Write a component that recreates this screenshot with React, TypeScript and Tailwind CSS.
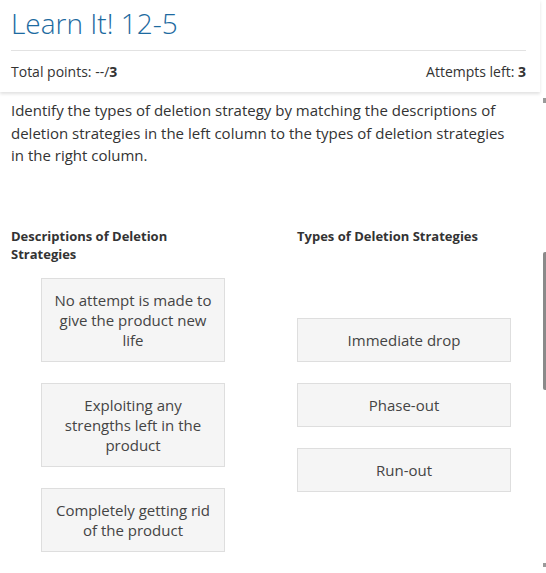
import React from "react";

const descriptions = [
  "No attempt is made to give the product new life",
  "Exploiting any strengths left in the product",
  "Completely getting rid of the product",
];

const types = ["Immediate drop", "Phase-out", "Run-out"];

function Card({ text, width }: { text: string; width: string }) {
  return (
    <div
      className={`${width} border border-[#dedede] bg-[#f5f5f5] px-3 py-[11px] text-center text-[15px] leading-[20px] text-[#444]`}
    >
      {text}
    </div>
  );
}

export default function App() {
  return (
    <div className="flex h-[573px] w-[546px] flex-col overflow-hidden bg-white font-['Open_Sans',sans-serif] text-[#333]">
      {/* header */}
      <div className="relative z-10 w-[540px] bg-white px-[11px] pt-[6px] shadow-[0_2px_3px_rgba(0,0,0,0.12)]">
        <h1 className="text-[28px] font-light leading-[34px] text-[#1d6aa0]">Learn It! 12-5</h1>
        <div className="mt-[10px] h-px w-[515px] bg-[#e2e2e2]" />
        <div className="flex w-[515px] items-center justify-between pt-[11px] pb-[10px] text-[14px] leading-[20px] text-[#333]">
          <span>
            Total points: --/<b className="font-bold">3</b>
          </span>
          <span>
            Attempts left: <b className="font-bold">3</b>
          </span>
        </div>
      </div>

      {/* body */}
      <div className="flex flex-1">
        <div className="w-[540px] px-[11px] pt-[7px]">
          <p className="w-[500px] text-[15px] leading-[22.5px] text-[#333]">
            Identify the types of deletion strategy by matching the descriptions of deletion strategies in the left
            column to the types of deletion strategies in the right column.
          </p>

          <div className="mt-[60px] flex">
            <div className="w-[286px]">
              <h3 className="w-[200px] text-[13px] font-bold leading-[18px] text-[#333]">
                Descriptions of Deletion Strategies
              </h3>
              <div className="mt-[15px] flex flex-col gap-[21px] pl-[30px]">
                {descriptions.map((d) => (
                  <Card key={d} text={d} width="w-[184px]" />
                ))}
              </div>
            </div>
            <div className="flex-1">
              <h3 className="text-[13px] font-bold leading-[18px] text-[#333]">Types of Deletion Strategies</h3>
              <div className="mt-[73px] flex flex-col gap-[21px]">
                {types.map((t) => (
                  <Card key={t} text={t} width="w-[214px]" />
                ))}
              </div>
            </div>
          </div>
        </div>

        {/* scrollbar */}
        <div className="flex w-[6px] flex-col items-end">
          <div className="mt-[6px] h-[5px] w-[3px] bg-[#9a9a9a]" />
          <div className="mt-[149px] h-[138px] w-[3px] rounded-l-[2px] bg-[#8a8a8a]" />
          <div className="mt-auto mb-[6px] h-[4px] w-[3px] bg-[#9a9a9a]" />
        </div>
      </div>
    </div>
  );
}
